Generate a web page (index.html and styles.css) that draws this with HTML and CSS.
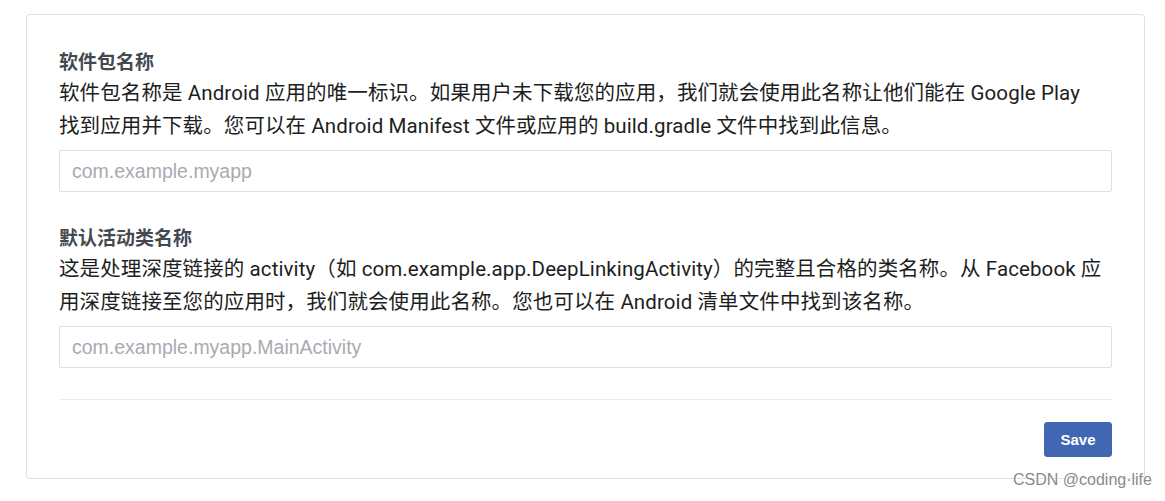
FILE: index.html
```html
<!DOCTYPE html>
<html lang="zh-CN">
<head>
	<meta charset="UTF-8">
	<title>Android 设置</title>
	<link rel="stylesheet" href="styles.css">
</head>
<body>
	<div class="panel">
		<div class="field field_first">
			<h3 class="field_title">软件包名称</h3>
			<p class="field_desc">软件包名称是 Android 应用的唯一标识。如果用户未下载您的应用，我们就会使用此名称让他们能在 Google Play<br>找到应用并下载。您可以在 Android Manifest 文件或应用的 build.gradle 文件中找到此信息。</p>
			<input class="field_input" type="text" placeholder="com.example.myapp">
		</div>
		<div class="field">
			<h3 class="field_title">默认活动类名称</h3>
			<p class="field_desc">这是处理深度链接的 activity（如 com.example.app.DeepLinkingActivity）的完整且合格的类名称。从 Facebook 应用深度链接至您的应用时，我们就会使用此名称。您也可以在 Android 清单文件中找到该名称。</p>
			<input class="field_input" type="text" placeholder="com.example.myapp.MainActivity">
		</div>
		<div class="panel_foot">
			<button class="btn_save" type="button">Save</button>
		</div>
	</div>
	<div class="mark">CSDN @coding·life</div>
</body>
</html>
```

FILE: styles.css
```css
/*样式重置*/
body{margin: 0; padding: 14px 0 0 26px; background: #fff; font-family: Roboto, "Noto Sans CJK SC", sans-serif; color: #1c1e21;}
h3,p{margin: 0; padding: 0;}

/*面板*/
.panel{width: 1119px; box-sizing: border-box; border: 1px solid #dddfe2; border-radius: 4px; padding: 30px 32px 21px;}

.field{margin-top: 29px;}
.field_first{margin-top: 0;}
.field_title{font-family: "Noto Sans CJK SC", sans-serif; font-size: 19px; line-height: 32px; font-weight: bold; color: #444950;}
.field_desc{font-size: 20.5px; line-height: 33px; letter-spacing: 0.1px; color: #1c1e21;}
.field_input{display: block; box-sizing: border-box; width: 100%; height: 42px; margin-top: 7px; padding: 0 12px; border: 1px solid #dddfe2; border-radius: 2px; font-family: "Liberation Sans", Arial, sans-serif; font-size: 19.5px; color: #1c1e21; outline: none;}
.field_input::placeholder{color: #a7abb1;}

.panel_foot{margin-top: 31px; border-top: 1px solid #e9ebee; padding-top: 22px; display: flex; justify-content: flex-end;}
.btn_save{width: 68px; height: 35px; border: 1px solid #4267b2; border-radius: 3px; background-color: #4267b2; color: #fff; font-family: "Liberation Sans", Arial, sans-serif; font-size: 15px; font-weight: bold; cursor: pointer;}

/*水印*/
.mark{position: absolute; left: 1013px; top: 471px; font-family: "Liberation Sans", Arial, sans-serif; font-size: 16px; color: #8a8a8a; text-shadow: 0 0 2px #fff, 0 0 2px #fff;}
```
